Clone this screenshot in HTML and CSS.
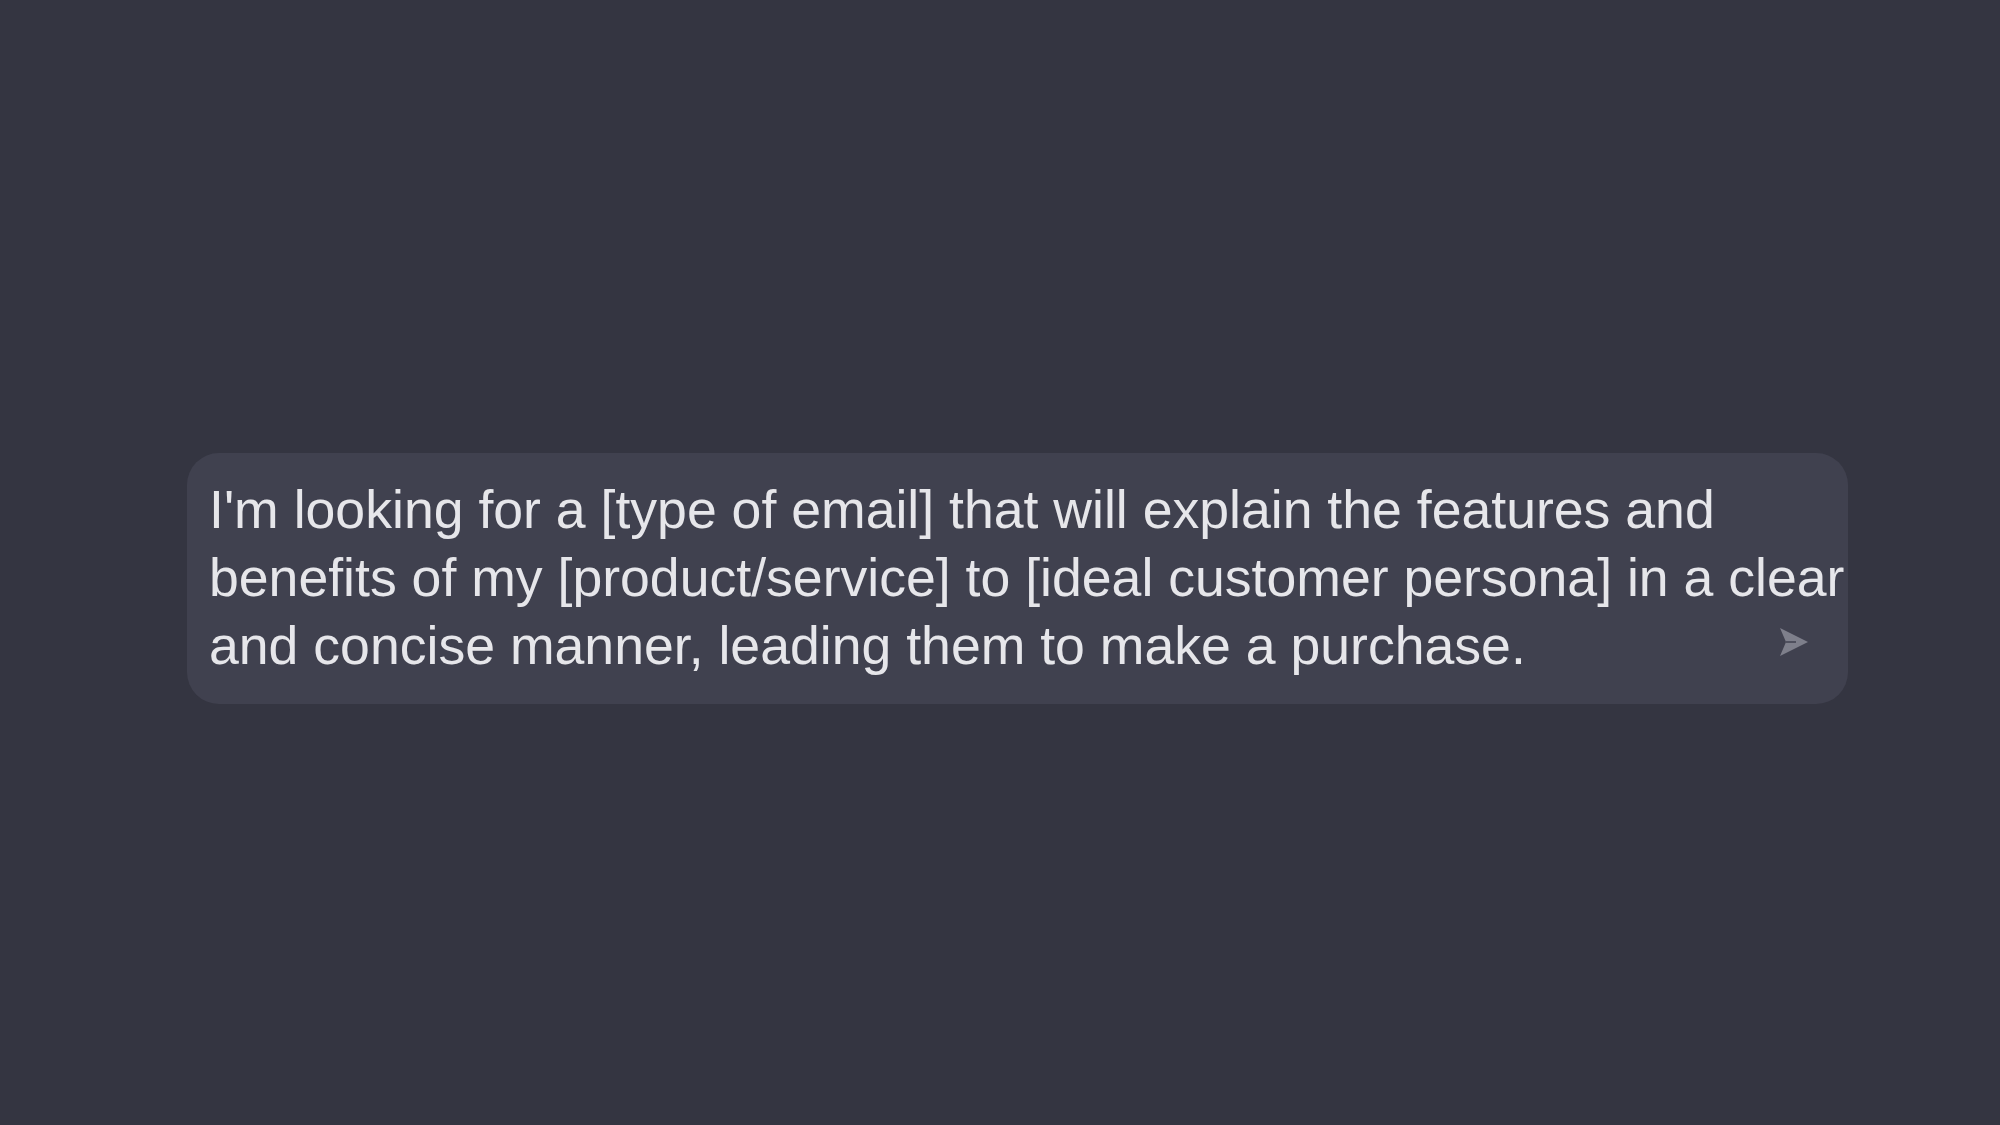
FILE: index.html
```html
<!DOCTYPE html>
<html>
<head>
<meta charset="utf-8">
<link rel="stylesheet" href="styles.css">
</head>
<body>
<main class="page">
  <div class="composer">
    <p class="prompt">I'm looking for a [type of email] that will explain the features and benefits of my [product/service] to [ideal customer persona] in a clear and concise manner, leading them to make a purchase.</p>
    <button class="send" aria-label="Send">
      <svg viewBox="0 0 28 28" width="28" height="28"><path d="M0 0 L28 14 L0 28 L6 14 Z" fill="#7e7f8b"/><path d="M6 14 H16" stroke="#40414f" stroke-width="1.5"/></svg>
    </button>
  </div>
</main>
</body>
</html>
```
FILE: styles.css
```css
html, body {
  margin: 0;
  padding: 0;
  background: #343541;
}
.page {
  width: 2000px;
  height: 1125px;
  box-sizing: border-box;
  padding: 453px 152px 0 187px;
}
.composer {
  position: relative;
  width: 1661px;
  height: 251px;
  box-sizing: border-box;
  background: #40414f;
  border-radius: 32px;
  padding: 22px 0 0 22px;
}
.prompt {
  margin: 0;
  font-family: "Liberation Sans", Arial, sans-serif;
  font-size: 53.6px;
  line-height: 68px;
  color: #e6e6ea;
  width: 1665px;
  position: relative;
  z-index: 1;
}
.send {
  position: absolute;
  right: 40px;
  bottom: 48px;
  width: 28px;
  height: 28px;
  padding: 0;
  border: 0;
  background: none;
}
.send svg { display: block; }
```
